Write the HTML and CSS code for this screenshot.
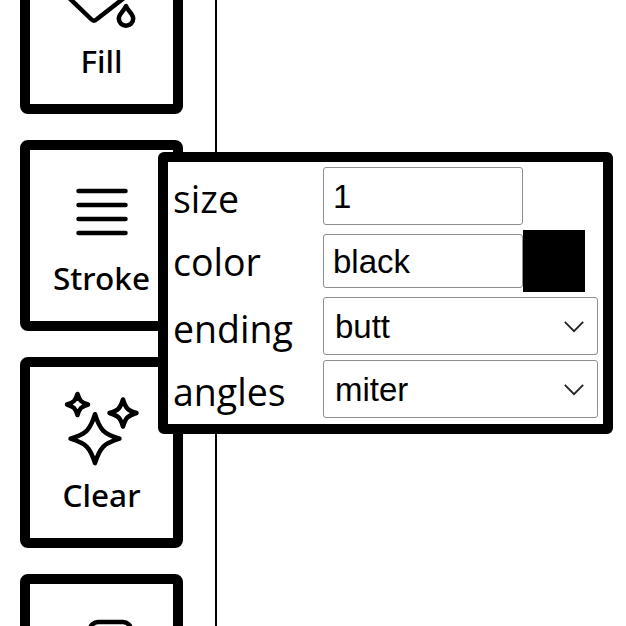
FILE: index.html
```html
<!DOCTYPE html>
<html lang="en">
<head>
  <meta charset="UTF-8" />
  <title>Paint</title>
  <link rel="stylesheet" href="styles.css">
</head>
<body>

  <!-- Tool column -->
  <div class="toolbar">
    <div class="tool">
      <svg class="tool-icon" viewBox="0 0 76 76" aria-hidden="true">
        <path d="M0 40 L27 66 Q30 69 33 66 L60 45"/>
        <path d="M62 53 C60 58 54.8 61 54.8 65.5 A7.2 7.2 0 0 0 69.2 65.5 C69.2 61 64 58 62 53 Z"/>
      </svg>
      <div class="tool-label">Fill</div>
    </div>
    <div class="tool">
      <svg class="tool-icon" viewBox="0 0 76 76" aria-hidden="true">
        <path d="M14.5 21 H61.5 M14.5 35 H61.5 M14.5 49 H61.5 M14.5 63 H61.5"/>
      </svg>
      <div class="tool-label">Stroke</div>
    </div>
    <div class="tool">
      <svg class="tool-icon" viewBox="0 0 76 76" aria-hidden="true">
        <path d="M31 27.2 C35.9 43.1 39.6 46.8 55.5 51.7 C39.6 56.6 35.9 60.3 31 76.2 C26.1 60.3 22.4 56.6 6.5 51.7 C22.4 46.8 26.1 43.1 31 27.2 Z"/>
        <path d="M13.5 7 C15.6 13.8 17.2 15.4 24 17.5 C17.2 19.6 15.6 21.2 13.5 28 C11.4 21.2 9.8 19.6 3 17.5 C9.8 15.4 11.4 13.8 13.5 7 Z"/>
        <path d="M59 12.5 C61.7 21.3 63.7 23.3 72.5 26 C63.7 28.7 61.7 30.7 59 39.5 C56.3 30.7 54.3 28.7 45.5 26 C54.3 23.3 56.3 21.3 59 12.5 Z"/>
      </svg>
      <div class="tool-label">Clear</div>
    </div>
    <div class="tool">
      <svg class="tool-icon" viewBox="0 0 76 76" aria-hidden="true">
        <rect x="26" y="18" width="41" height="50" rx="8"/>
      </svg>
    </div>
  </div>

  <!-- Stroke settings popup -->
  <div class="popup">
    <div class="popup-row">
      <label class="popup-label">size</label>
      <input class="popup-input" type="text" value="1">
    </div>
    <div class="popup-row color-row">
      <label class="popup-label">color</label>
      <input class="popup-input color-input" type="text" value="black">
      <div class="swatch"></div>
    </div>
    <div class="popup-row">
      <label class="popup-label">ending</label>
      <div class="popup-select">butt
        <svg viewBox="0 0 24 14" aria-hidden="true"><path d="M2 2 L12 12 L22 2"/></svg>
      </div>
    </div>
    <div class="popup-row">
      <label class="popup-label">angles</label>
      <div class="popup-select">miter
        <svg viewBox="0 0 24 14" aria-hidden="true"><path d="M2 2 L12 12 L22 2"/></svg>
      </div>
    </div>
  </div>

</body>
</html>
```

FILE: styles.css
```css
html, body {
  height: 100%;
}

body {
  margin: 0;
  background: white;
  color: black;
  overflow: hidden;
  position: relative;
  font-family: 'Noto Sans', sans-serif;
}

.toolbar {
  width: 217px;
  height: 703px;
  margin-top: -77px;
  padding-left: 20px;
  box-sizing: border-box;
  border-right: 2px solid black;
  overflow: hidden;
  display: flex;
  flex-direction: column;
  gap: 26px;
}

.tool {
  width: 163px;
  height: 191px;
  flex: none;
  box-sizing: border-box;
  border: 10px solid black;
  border-radius: 8px;
  display: flex;
  flex-direction: column;
  align-items: center;
  padding-top: 20px;
}

.tool-icon {
  width: 76px;
  height: 76px;
  flex: none;
  overflow: visible;
  fill: none;
  stroke: black;
  stroke-width: 4.5;
  stroke-linecap: round;
  stroke-linejoin: round;
}

.tool-label {
  font-size: 31.5px;
  font-weight: 500;
  line-height: 40px;
  margin-top: 12px;
}

.popup {
  position: absolute;
  left: 158px;
  top: 152px;
  width: 455px;
  height: 282px;
  box-sizing: border-box;
  border: 10px solid black;
  border-radius: 6px;
  background: white;
  padding: 5px 5px 0 5px;
  display: flex;
  flex-direction: column;
  gap: 5px;
}

.popup-row {
  display: flex;
  align-items: center;
}

.popup-label {
  width: 150px;
  flex: none;
  padding-top: 5px;
  font-family: 'Open Sans', sans-serif;
  font-size: 37.5px;
}

.color-row .popup-label {
  padding-top: 0;
}

.popup-input {
  width: 200px;
  height: 58px;
  flex: none;
  box-sizing: border-box;
  margin: 0;
  padding: 2px 9px 0 9px;
  border: 1px solid #8f8f8f;
  border-radius: 3px;
  font-family: 'Liberation Sans', sans-serif;
  font-size: 33px;
  color: black;
}

.color-input {
  height: 54px;
}

.swatch {
  width: 62px;
  height: 62px;
  background: black;
}

.popup-select {
  width: 275px;
  height: 58px;
  flex: none;
  box-sizing: border-box;
  padding: 2px 12px 0 11px;
  border: 1px solid #8f8f8f;
  border-radius: 3px;
  font-family: 'Liberation Sans', sans-serif;
  font-size: 33px;
  display: flex;
  align-items: center;
  justify-content: space-between;
}

.popup-select svg {
  width: 22px;
  height: 13px;
  margin-top: -2px;
  fill: none;
  stroke: #222;
  stroke-width: 2;
}
```
